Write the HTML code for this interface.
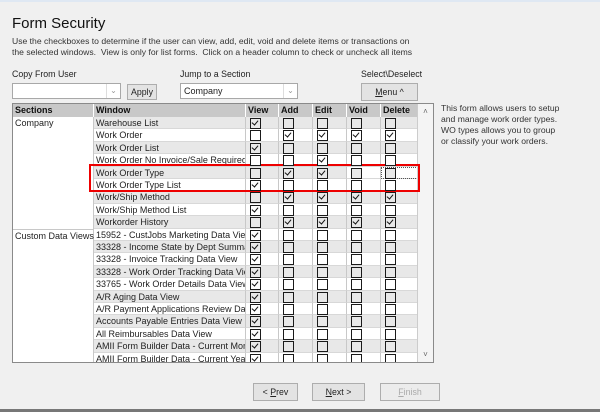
<!DOCTYPE html>
<html><head><meta charset="utf-8"><style>
*{box-sizing:border-box;margin:0;padding:0}
body{width:600px;height:412px;background:#f0f0f0;font-family:"Liberation Sans",sans-serif;font-size:9px;color:#222;position:relative;overflow:hidden}
.a{position:absolute}
.title{left:12px;top:15px;font-size:15px;color:#111}
.desc{left:12px;top:36px;font-size:8.6px;line-height:10.5px;color:#333}
.lbl{font-size:8.8px;color:#222}
.combo{background:#fff;border:1px solid #a8a8a8;height:16px}
.combo .dd{position:absolute;right:0;top:0;width:14px;height:14px;border-left:1px solid #ddd;color:#999;font-size:8px;text-align:center;line-height:14px}
.btn{background:#e3e3e3;border:1px solid #adadad;text-align:center;font-size:8.8px}
#grid{left:12px;top:103px;width:422px;height:260px;background:#fff;border:1px solid #8a8a8a;overflow:hidden}
.hdr{position:absolute;left:0;top:0;height:13px;width:405px;background:#c8c8c8;display:flex;font-weight:bold;font-size:9px;color:#111}
.hdr div{border-right:1px solid #fff;padding-left:2px;line-height:13px}
.row{position:absolute;left:0;height:12.4px;width:405px;display:flex;line-height:12px}
.row>div{border-right:1px solid #c8c8c8;border-bottom:1px solid #d8d8d8;position:relative;white-space:nowrap}
.s{width:81px;background:#fff;border-bottom:none!important;padding-left:2px}
.w{width:152px;padding-left:2px;overflow:hidden}
.g>div:not(.s){background:#e8e8e8}
.c1{width:33px}.c2{width:34px}.c3{width:34px}.c4{width:34px}.c5{width:37px}
.b::before{content:"";position:absolute;left:4px;top:1px;width:9px;height:9px;border:1.6px solid #1a1a1a;background:#fff;z-index:1}
.g .b::before{background:#e8e8e8}
.k::after{content:"";position:absolute;left:7.3px;top:2px;width:3px;height:5px;border-right:1.5px solid #111;border-bottom:1.5px solid #111;transform:rotate(40deg);z-index:2}
#sb{position:absolute;right:0;top:0;width:16px;height:258px;background:#f4f4f4;border-left:1px solid #ccc;color:#666;font-size:8px;text-align:center}
</style></head><body>
<div class="a" style="left:0;top:0;width:600px;height:2px;background:#dfe8f3"></div>
<div class="a title">Form Security</div>
<div class="a desc">Use the checkboxes to determine if the user can view, add, edit, void and delete items or transactions on<br>the selected windows.&nbsp; View is only for list forms.&nbsp; Click on a header column to check or uncheck all items</div>
<div class="a lbl" style="left:12px;top:69px">Copy From User</div>
<div class="a lbl" style="left:180px;top:69px">Jump to a Section</div>
<div class="a lbl" style="left:361px;top:69px">Select\Deselect</div>
<div class="a combo" style="left:12px;top:83px;width:109px"><div class="dd">&#8964;</div></div>
<div class="a btn" style="left:127px;top:84px;width:30px;height:16px;line-height:14px">Apply</div>
<div class="a combo" style="left:180px;top:83px;width:118px;padding-left:3px;line-height:14px">Company<div class="dd">&#8964;</div></div>
<div class="a btn" style="left:361px;top:83px;width:57px;height:18px;line-height:16px"><u>M</u>enu ^</div>
<div class="a" style="left:441px;top:103px;font-size:8.6px;line-height:11px;color:#333">This form allows users to setup<br>and manage work order types.<br>WO types allows you to group<br>or classify your work orders.</div>

<div id="grid" class="a">
<div class="hdr"><div style="width:81px">Sections</div><div style="width:152px">Window</div><div style="width:33px">View</div><div style="width:34px">Add</div><div style="width:34px">Edit</div><div style="width:34px">Void</div><div style="width:37px">Delete</div></div>
<div class="row g" style="top:13px"><div class="s">Company</div><div class="w">Warehouse List</div><div class="c1 b k"></div><div class="c2 b"></div><div class="c3 b"></div><div class="c4 b"></div><div class="c5 b"></div></div>
<div class="row" style="top:25.4px"><div class="s"></div><div class="w">Work Order</div><div class="c1 b"></div><div class="c2 b k"></div><div class="c3 b k"></div><div class="c4 b k"></div><div class="c5 b k"></div></div>
<div class="row g" style="top:37.8px"><div class="s"></div><div class="w">Work Order List</div><div class="c1 b k"></div><div class="c2 b"></div><div class="c3 b"></div><div class="c4 b"></div><div class="c5 b"></div></div>
<div class="row" style="top:50.2px"><div class="s"></div><div class="w">Work Order No Invoice/Sale Required</div><div class="c1 b"></div><div class="c2 b"></div><div class="c3 b k"></div><div class="c4 b"></div><div class="c5 b"></div></div>
<div class="row g" style="top:62.6px"><div class="s"></div><div class="w">Work Order Type</div><div class="c1 b"></div><div class="c2 b k"></div><div class="c3 b k"></div><div class="c4 b" style="background:#fff"></div><div class="c5 b" style="background:#fff;outline:1px dotted #555;outline-offset:-1px"></div></div>
<div class="row" style="top:75px"><div class="s"></div><div class="w">Work Order Type List</div><div class="c1 b k"></div><div class="c2 b"></div><div class="c3 b"></div><div class="c4 b"></div><div class="c5 b"></div></div>
<div class="row g" style="top:87.4px"><div class="s"></div><div class="w">Work/Ship Method</div><div class="c1 b"></div><div class="c2 b k"></div><div class="c3 b k"></div><div class="c4 b k"></div><div class="c5 b k"></div></div>
<div class="row" style="top:99.8px"><div class="s"></div><div class="w">Work/Ship Method List</div><div class="c1 b k"></div><div class="c2 b"></div><div class="c3 b"></div><div class="c4 b"></div><div class="c5 b"></div></div>
<div class="row g" style="top:112.2px"><div class="s"></div><div class="w">Workorder History</div><div class="c1 b"></div><div class="c2 b k"></div><div class="c3 b k"></div><div class="c4 b k"></div><div class="c5 b k"></div></div>
<div class="row" style="top:124.6px"><div class="s" style="border-top:1px solid #c8c8c8">Custom Data Views</div><div class="w">15952 - CustJobs Marketing Data View</div><div class="c1 b k"></div><div class="c2 b"></div><div class="c3 b"></div><div class="c4 b"></div><div class="c5 b"></div></div>
<div class="row g" style="top:137px"><div class="s"></div><div class="w">33328 - Income State by Dept Summary</div><div class="c1 b k"></div><div class="c2 b"></div><div class="c3 b"></div><div class="c4 b"></div><div class="c5 b"></div></div>
<div class="row" style="top:149.4px"><div class="s"></div><div class="w">33328 - Invoice Tracking Data View</div><div class="c1 b k"></div><div class="c2 b"></div><div class="c3 b"></div><div class="c4 b"></div><div class="c5 b"></div></div>
<div class="row g" style="top:161.8px"><div class="s"></div><div class="w">33328 - Work Order Tracking Data View</div><div class="c1 b k"></div><div class="c2 b"></div><div class="c3 b"></div><div class="c4 b"></div><div class="c5 b"></div></div>
<div class="row" style="top:174.2px"><div class="s"></div><div class="w">33765 - Work Order Details Data View</div><div class="c1 b k"></div><div class="c2 b"></div><div class="c3 b"></div><div class="c4 b"></div><div class="c5 b"></div></div>
<div class="row g" style="top:186.6px"><div class="s"></div><div class="w">A/R Aging Data View</div><div class="c1 b k"></div><div class="c2 b"></div><div class="c3 b"></div><div class="c4 b"></div><div class="c5 b"></div></div>
<div class="row" style="top:199px"><div class="s"></div><div class="w">A/R Payment Applications Review Data</div><div class="c1 b k"></div><div class="c2 b"></div><div class="c3 b"></div><div class="c4 b"></div><div class="c5 b"></div></div>
<div class="row g" style="top:211.4px"><div class="s"></div><div class="w">Accounts Payable Entries Data View</div><div class="c1 b k"></div><div class="c2 b"></div><div class="c3 b"></div><div class="c4 b"></div><div class="c5 b"></div></div>
<div class="row" style="top:223.8px"><div class="s"></div><div class="w">All Reimbursables Data View</div><div class="c1 b k"></div><div class="c2 b"></div><div class="c3 b"></div><div class="c4 b"></div><div class="c5 b"></div></div>
<div class="row g" style="top:236.2px"><div class="s"></div><div class="w">AMII Form Builder Data - Current Month</div><div class="c1 b k"></div><div class="c2 b"></div><div class="c3 b"></div><div class="c4 b"></div><div class="c5 b"></div></div>
<div class="row" style="top:248.6px"><div class="s"></div><div class="w">AMII Form Builder Data - Current Year</div><div class="c1 b k"></div><div class="c2 b"></div><div class="c3 b"></div><div class="c4 b"></div><div class="c5 b"></div></div>
<div id="sb"><div style="margin-top:3px">&#708;</div><div style="position:absolute;bottom:3px;width:15px">&#709;</div></div>
</div>
<div class="a" style="left:89px;top:164px;width:331px;height:28px;border:2px solid #e00"></div>

<div class="a btn" style="left:253px;top:383px;width:45px;height:18px;line-height:16px">&lt; <u>P</u>rev</div>
<div class="a btn" style="left:312px;top:383px;width:53px;height:18px;line-height:16px"><u>N</u>ext &gt;</div>
<div class="a btn" style="left:380px;top:383px;width:60px;height:18px;line-height:16px;color:#aaa;background:#ececec"><u>F</u>inish</div>
<div class="a" style="left:0;top:409px;width:600px;height:3px;background:#777"></div>
</body></html>
